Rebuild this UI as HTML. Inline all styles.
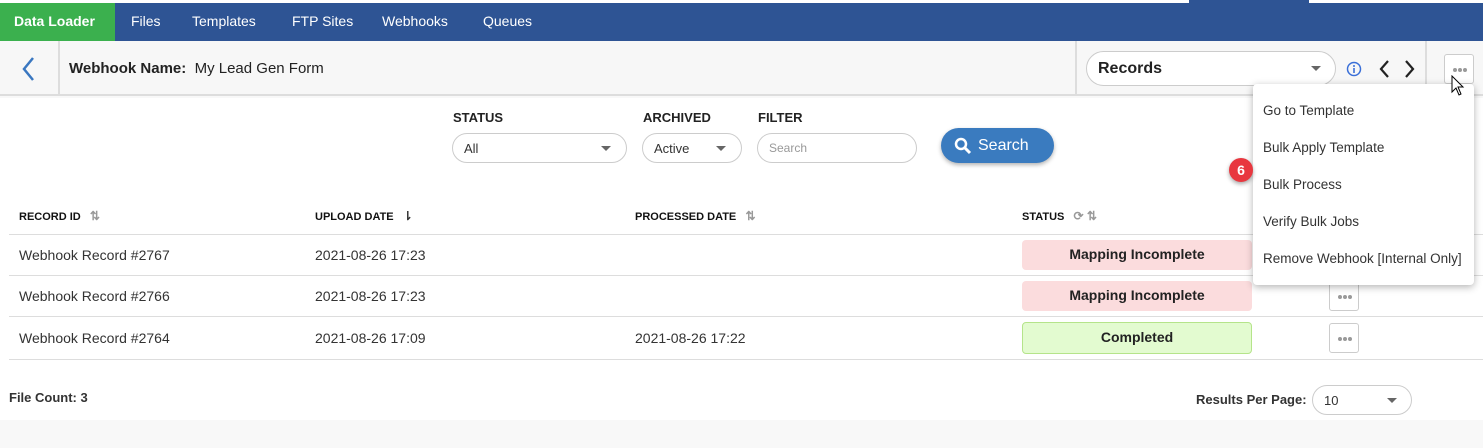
<!DOCTYPE html>
<html><head><style>
*{box-sizing:border-box;margin:0;padding:0}
body{width:1483px;height:448px;overflow:hidden;background:#f8f8f8;font-family:"Liberation Sans",sans-serif;color:#333;position:relative}
.a{position:absolute}
.nav{left:0;top:3px;width:1483px;height:38px;background:#2e5494}
.nav span{position:absolute;top:10px;color:#fff;font-size:14px}
.hdr{left:0;top:41px;width:1483px;height:55px;background:#f7f7f7;border-bottom:2px solid #ddd}
.main{left:0;top:98px;width:1483px;height:322px;background:#fff}
.lbl{font-weight:bold;font-size:13px;color:#222}
.sel{border:1px solid #ccc;border-radius:15px;background:#fff;font-size:13px;padding:7px 11px;height:30px}
.caret{position:absolute;width:0;height:0;border-left:5px solid transparent;border-right:5px solid transparent;border-top:5px solid #666}
.th{font-size:11px;font-weight:bold;color:#111;top:209px}
.line{left:9px;width:1474px;height:1px;background:#ddd}
.td{font-size:14px;color:#333}
.badge{left:1022px;width:230px;height:30px;border-radius:4px;font-size:14px;font-weight:bold;text-align:center;line-height:29px;color:#222}
.dots{width:30px;height:30px;border:1px solid #ccc;border-radius:3px;background:#fff}
.dots svg{position:absolute;left:7px;top:12px}
.menu{left:1253px;top:84px;width:221px;height:201px;background:#fff;border-radius:4px;box-shadow:0 2px 8px rgba(0,0,0,.3)}
.menu div{position:absolute;left:10px;font-size:13.5px;color:#333}
.sort{color:#999;font-size:12px}
</style></head><body>
<div class="a" style="left:0;top:0;width:1483px;height:3px;background:#fff"></div>
<div class="a" style="left:1189px;top:0;width:120px;height:3px;background:#2e5494"></div>
<div class="a nav">
<div class="a" style="left:0;top:0;width:115px;height:38px;background:#3bb04e"></div>
<span style="left:14px;font-weight:bold">Data Loader</span>
<span style="left:131px">Files</span>
<span style="left:192px">Templates</span>
<span style="left:292px">FTP Sites</span>
<span style="left:382px">Webhooks</span>
<span style="left:483px">Queues</span>
</div>
<div class="a hdr">
<div class="a" style="left:58px;top:0;width:2px;height:55px;background:#ddd"></div>
<div class="a" style="left:1075px;top:0;width:2px;height:55px;background:#ddd"></div>
<div class="a" style="left:1425px;top:0;width:2px;height:55px;background:#ddd"></div>
<svg class="a" style="left:20px;top:15px" width="16" height="26"><path d="M13 2 L4 13 L13 24" stroke="#3a77c0" stroke-width="2.5" fill="none"/></svg>
<div class="a" style="left:69px;top:19px;font-size:15px;color:#222"><b>Webhook Name:</b>&nbsp; My Lead Gen Form</div>
<div class="a sel" style="left:1086px;top:10px;width:250px;height:35px;border-radius:18px;font-size:16px;font-weight:bold;color:#222;padding:8px 11px">Records</div>
<div class="caret" style="left:1311px;top:25px"></div>
<svg class="a" style="left:1346px;top:20px" width="16" height="16"><circle cx="8" cy="8" r="6.5" stroke="#3a6fd8" stroke-width="1.5" fill="none"/><rect x="7.2" y="7" width="1.6" height="5" fill="#3a6fd8"/><circle cx="8" cy="5" r="1" fill="#3a6fd8"/></svg>
<svg class="a" style="left:1376px;top:17px" width="50" height="22"><path d="M12 3 L5 11 L12 19 M30 3 L37 11 L30 19" stroke="#222" stroke-width="2.2" fill="none"/></svg>
<div class="a dots" style="left:1444px;top:13px"><svg width="16" height="6"><circle cx="3" cy="3" r="2" fill="#999"/><circle cx="8" cy="3" r="2" fill="#999"/><circle cx="13" cy="3" r="2" fill="#999"/></svg></div>
</div>
<div class="a main"></div>
<div class="a lbl" style="left:453px;top:110px">STATUS</div>
<div class="a lbl" style="left:643px;top:110px">ARCHIVED</div>
<div class="a lbl" style="left:758px;top:110px">FILTER</div>
<div class="a sel" style="left:452px;top:133px;width:175px">All</div><div class="caret" style="left:601px;top:146px"></div>
<div class="a sel" style="left:642px;top:133px;width:100px">Active</div><div class="caret" style="left:716px;top:146px"></div>
<div class="a sel" style="left:757px;top:133px;width:160px;color:#999;font-size:12px">Search</div>
<div class="a" style="left:941px;top:128px;width:113px;height:35px;border-radius:18px;background:#3a7bbf;color:#fff;font-size:16px;line-height:35px;box-shadow:0 2px 4px rgba(0,0,0,.3)">
<svg class="a" style="left:13px;top:9px" width="18" height="18"><circle cx="7" cy="7" r="5" stroke="#fff" stroke-width="2.5" fill="none"/><path d="M11 11 L16 16" stroke="#fff" stroke-width="3"/></svg>
<span class="a" style="left:37px;top:0">Search</span></div>
<div class="a th" style="left:19px">RECORD ID &nbsp; <span class="sort">⇅</span></div>
<div class="a th" style="left:315px">UPLOAD DATE &nbsp; <span class="sort" style="color:#333">⇂</span></div>
<div class="a th" style="left:635px">PROCESSED DATE &nbsp; <span class="sort">⇅</span></div>
<div class="a th" style="left:1022px">STATUS &nbsp; <span class="sort">⟳ ⇅</span></div>
<div class="a line" style="top:234px"></div>
<div class="a line" style="top:275px"></div>
<div class="a line" style="top:316px"></div>
<div class="a line" style="top:359px"></div>
<div class="a td" style="left:19px;top:247px">Webhook Record #2767</div>
<div class="a td" style="left:315px;top:247px">2021-08-26 17:23</div>
<div class="a td" style="left:19px;top:288px">Webhook Record #2766</div>
<div class="a td" style="left:315px;top:288px">2021-08-26 17:23</div>
<div class="a td" style="left:19px;top:330px">Webhook Record #2764</div>
<div class="a td" style="left:315px;top:330px">2021-08-26 17:09</div>
<div class="a td" style="left:635px;top:330px">2021-08-26 17:22</div>
<div class="a badge" style="top:240px;background:#fbdcdd">Mapping Incomplete</div>
<div class="a badge" style="top:281px;background:#fbdcdd">Mapping Incomplete</div>
<div class="a badge" style="top:322px;height:32px;background:#e3fbd0;border:1px solid #b5e48a">Completed</div>
<div class="a dots" style="left:1329px;top:281px"><svg width="16" height="6"><circle cx="3" cy="3" r="2" fill="#999"/><circle cx="8" cy="3" r="2" fill="#999"/><circle cx="13" cy="3" r="2" fill="#999"/></svg></div>
<div class="a dots" style="left:1329px;top:323px"><svg width="16" height="6"><circle cx="3" cy="3" r="2" fill="#999"/><circle cx="8" cy="3" r="2" fill="#999"/><circle cx="13" cy="3" r="2" fill="#999"/></svg></div>
<div class="a" style="left:9px;top:390px;font-size:13px;font-weight:bold;color:#333">File Count: 3</div>
<div class="a" style="left:1196px;top:392px;font-size:13px;font-weight:bold;color:#333">Results Per Page:</div>
<div class="a sel" style="left:1312px;top:385px;width:100px;height:30px">10</div><div class="caret" style="left:1387px;top:398px"></div>
<div class="a menu">
<div style="top:19px">Go to Template</div>
<div style="top:56px">Bulk Apply Template</div>
<div style="top:93px">Bulk Process</div>
<div style="top:130px">Verify Bulk Jobs</div>
<div style="top:167px">Remove Webhook [Internal Only]</div>
</div>
<div class="a" style="left:1229px;top:158px;width:24px;height:24px;border-radius:12px;background:#e8373f;color:#fff;font-weight:bold;font-size:14px;text-align:center;line-height:24px;box-shadow:0 2px 4px rgba(0,0,0,.35)">6</div>
<svg class="a" style="left:1451px;top:75px" width="16" height="22"><path d="M1 1 L1 17 L5 13 L8 20 L10 19 L7 12 L12 12 Z" fill="#fff" stroke="#000" stroke-width="1"/></svg>
</body></html>
